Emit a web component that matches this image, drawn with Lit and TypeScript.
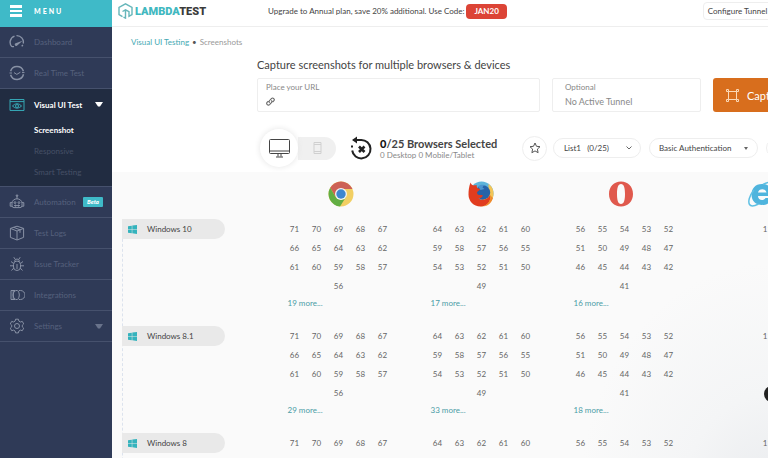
import { LitElement, html, css, svg, nothing } from "lit";
import { customElement, state } from "lit/decorators.js";

const icons = {
  dashboard: svg`<path stroke-width="1.400" d="M3 12.800A6.500 6.500 0 0 1 5.500 2.100M7.500 1.600A6.500 6.500 0 0 1 14.200 9.500M3 12.600h2M13.800 10.800l-1 1.600"/><path fill="#8891a5" stroke="none" d="M6 9.600L13.500 6.800 8.500 11.300a1.500 1.500 0 0 1-2.500-1.700z"/>`,
  realtime: svg`<path stroke-width="1.500" d="M1.600 6.200a6.700 6.700 0 0 1 12.800 0M14.500 9.300a6.700 6.700 0 0 1-12.900.400"/><path d="M.500 8h2.500M13 7.600h2.500M5 7.600l2.800 1.800 3.600-2.200"/>`,
  visual: svg`<path d="M1 2.500h14v11H1zM1 4.600h14M3.400 9q4.600-4.600 9.200 0q-4.600 4.400-9.200 0z"/><circle cx="8" cy="9" r="1.500"/>`,
  automation: svg`<path d="M8 1v4M3 9.200a5 4.400 0 0 1 10 0v2.400a2 2 0 0 1-2 2H5a2 2 0 0 1-2-2zM3 8.600H1.200v3.600H3M13 8.600h1.800v3.600H13M5 11.600h6M6.500 10.600v2M9.500 10.600v2"/><circle cx="6" cy="8.600" r=".9"/><circle cx="10" cy="8.600" r=".9"/><circle cx="8" cy="1.600" r=".8"/>`,
  logs: svg`<path d="M8 1.200l6.600 2.200v9L8 15l-6.600-2.600v-9zM1.400 3.400L8 6l6.600-2.600M8 6v9M4.600 2.300L11 4.800v3"/>`,
  bug: svg`<path d="M4.500 8.500a3.500 3.500 0 0 1 7 0V11a3.500 3.500 0 0 1-7 0zM5.600 5.400a2.400 2.400 0 0 1 4.800 0M6 3L4.800 1.200M10 3l1.200-1.800M4.500 7.500L2 5.500M11.500 7.500L14 5.500M4.500 9.800H1M11.500 9.800H15M4.800 12L2.500 14.500M11.200 12l2.300 2.500M8 8v5"/>`,
  integrations: svg`<path d="M6 3.500H2v9h4M10 3.500h1.500a4.500 4.500 0 0 1 0 9H10M8.500 3.500H6.800a5 5 0 0 0 0 9h1.700M8.800 3.500a8 8 0 0 1 0 9M4.200 3.500v9"/>`,
  settings: svg`<path d="M6.600 1.200h2.800l.5 1.900 1.500.9 1.900-.6 1.400 2.500-1.400 1.300v1.700l1.400 1.300-1.400 2.500-1.900-.6-1.500.9-.5 1.900H6.600l-.5-1.900-1.500-.9-1.900.6-1.400-2.500 1.400-1.300V7.200L1.300 5.900l1.400-2.500 1.900.6 1.500-.9z"/><circle cx="8" cy="8" r="2.500"/>`,
};

type IconName = keyof typeof icons;
interface NavItem {
  label: string;
  icon: IconName;
  badge?: string;
  expandable?: boolean;
  children?: string[];
}

const nav: NavItem[] = [
  { label: "Dashboard", icon: "dashboard" },
  { label: "Real Time Test", icon: "realtime" },
  {
    label: "Visual UI Test",
    icon: "visual",
    expandable: true,
    children: ["Screenshot", "Responsive", "Smart Testing"],
  },
  { label: "Automation", icon: "automation", badge: "Beta" },
  { label: "Test Logs", icon: "logs" },
  { label: "Issue Tracker", icon: "bug" },
  { label: "Integrations", icon: "integrations" },
  { label: "Settings", icon: "settings", expandable: true },
];

const chrome = [71, 70, 69, 68, 67, 66, 65, 64, 63, 62, 61, 60, 59, 58, 57, 56];
const firefox = chrome.map((v) => v - 7);
const opera = chrome.map((v) => v - 15);

interface System {
  name: string;
  shown: number;
  more: number[];
}

const systems: System[] = [
  { name: "Windows 10", shown: 16, more: [19, 17, 16] },
  { name: "Windows 8.1", shown: 16, more: [29, 33, 18] },
  { name: "Windows 8", shown: 5, more: [] },
];

@customElement("side-nav")
export class SideNav extends LitElement {
  static styles = css`
    :host {
      display: block;
      background: #2f3a57;
      color: #56617d;
      font-size: 8px;
    }
    button {
      font: inherit;
      color: inherit;
      background: none;
      border: 0;
      padding: 0;
    }
    .menu {
      display: flex;
      align-items: center;
      gap: 12px;
      width: 100%;
      height: 27px;
      padding: 0 0 6px 10px;
      background: #3fbac8;
      color: #fff;
      font-size: 7px;
      font-weight: 900;
      letter-spacing: 2px;
    }
    .bars {
      width: 12px;
      height: 12px;
      fill: #fff;
    }
    ul {
      list-style: none;
      margin: 0;
      padding: 0;
    }
    .entry {
      border-bottom: 1px solid #46516d;
    }
    .row {
      display: flex;
      align-items: center;
      height: 30px;
      padding: 0 9px;
      text-decoration: none;
      color: inherit;
      white-space: nowrap;
    }
    .icon {
      width: 16px;
      height: 16px;
      margin-right: 9px;
      fill: none;
      stroke: #8891a5;
      stroke-width: 1;
      flex: none;
    }
    .caret {
      width: 8px;
      height: 5px;
      margin-left: auto;
      fill: #69738b;
    }
    .badge {
      margin-left: auto;
      padding: 0 4px;
      border-radius: 1px;
      background: #3fbac8;
      color: #fff;
      font-size: 6px;
      line-height: 10px;
      font-weight: 900;
      font-style: italic;
    }
    .open {
      background: #212c41;
      padding-bottom: 3px;
    }
    .open .row {
      color: #fff;
      font-weight: 700;
      height: 31px;
    }
    .open .icon {
      stroke: #35a5b3;
    }
    .open .caret {
      fill: #fff;
    }
    .child {
      display: block;
      padding-left: 34px;
      line-height: 21px;
      color: #465066;
      text-decoration: none;
    }
    .child[aria-current] {
      color: #fff;
      font-weight: 700;
    }
  `;

  render() {
    return html`
      <button class="menu">
        <svg class="bars" viewBox="0 0 12 12" aria-hidden="true">
          <path d="M0 0h12v3H0zM0 5h12v2H0zM0 9h12v3H0z" />
        </svg>
        MENU
      </button>
      <nav>
        <ul>
          ${nav.map(
            (item) => html`<li class="entry ${item.children ? "open" : ""}">
              <a class="row" href="#">
                <svg class="icon" viewBox="0 0 16 16" aria-hidden="true">${icons[item.icon]}</svg>
                <span>${item.label}</span>
                ${item.badge ? html`<span class="badge">${item.badge}</span>` : nothing}
                ${item.expandable
                  ? html`<svg class="caret" viewBox="0 0 8 5" aria-hidden="true"><path d="M0 0h8L5 4.500H3z" /></svg>`
                  : nothing}
              </a>
              ${item.children
                ? html`<ul>
                    ${item.children.map(
                      (c, i) => html`<li>
                        <a class="child" href="#" aria-current=${i === 0 ? "page" : nothing}>${c}</a>
                      </li>`
                    )}
                  </ul>`
                : nothing}
            </li>`
          )}
        </ul>
      </nav>
    `;
  }
}

@customElement("browser-matrix")
export class BrowserMatrix extends LitElement {
  @state() private picked = new Set<string>();

  static styles = css`
    :host {
      display: block;
      flex: 1;
      background: radial-gradient(ellipse 190px 240px at 100% 90%, #e9ebee 0, #f4f5f6 45%, #fafafa 100%);
    }
    table,
    thead,
    tbody {
      display: block;
    }
    tbody {
      margin-left: 10px;
      border-left: 1px dashed #dce3ee;
    }
    tr {
      display: grid;
    }
    .head {
      grid-template-columns: 159px repeat(4, 140px);
      height: 47px;
      box-sizing: border-box;
      padding-top: 9px;
    }
    .system {
      grid-template-columns: 144px repeat(4, 143px);
      height: 107px;
    }
    th,
    td {
      padding: 0;
      text-align: center;
      font-weight: 400;
    }
    .logo {
      width: 26px;
      height: 26px;
    }
    .os {
      display: flex;
      align-items: center;
      gap: 10px;
      width: 103px;
      height: 20px;
      margin-left: -1px;
      padding-left: 6px;
      box-sizing: border-box;
      border-radius: 0 10px 10px 0;
      background: #e9e9e9;
      color: #444;
      font-size: 8px;
    }
    .win {
      width: 9px;
      height: 9px;
      fill: #35b3bd;
    }
    .versions {
      display: flex;
      flex-wrap: wrap;
      justify-content: center;
      width: 110px;
      margin: 0 auto;
    }
    button {
      width: 22px;
      height: 19px;
      padding: 0;
      border: 0;
      background: none;
      font: inherit;
      font-size: 8px;
      color: #666;
    }
    button[aria-pressed="true"] {
      color: #2f9aa5;
      font-weight: 700;
    }
    .more {
      display: block;
      width: 102px;
      margin: 0 auto;
      text-align: left;
      color: #4a9ca6;
      text-decoration: none;
      font-size: 8px;
      line-height: 16px;
    }
  `;

  private toggle(key: string) {
    const next = new Set(this.picked);
    next.has(key) ? next.delete(key) : next.add(key);
    this.picked = next;
  }

  private cell(s: System, browser: string, versions: number[], more?: number) {
    return html`<td>
      <div class="versions">
        ${versions.slice(0, s.shown).map((v) => {
          const key = `${s.name}/${browser}/${v}`;
          return html`<button aria-pressed=${this.picked.has(key)} @click=${() => this.toggle(key)}>${v}</button>`;
        })}
      </div>
      ${more ? html`<a class="more" href="#">${more} more...</a>` : nothing}
    </td>`;
  }

  render() {
    return html`<table>
      <thead>
        <tr class="head">
          <td></td>
          <th scope="col" aria-label="Chrome">
            <svg class="logo" viewBox="0 0 26 26">
              <circle cx="13" cy="13" r="12.500" fill="#f2cf63" />
              <path d="M2.200 6.800A12.500 12.500 0 0 1 23.800 6.800L24.500 8H13L7.600 16z" fill="#cd6155" />
              <path d="M2.200 6.800A12.500 12.500 0 0 0 12 25.500L18 16l-5 3-5.400-3z" fill="#62ae43" />
              <circle cx="13" cy="13" r="6" fill="#f4f4f2" />
              <circle cx="13" cy="13" r="4.700" fill="#3e87cf" />
            </svg>
          </th>
          <th scope="col" aria-label="Firefox">
            <svg class="logo" viewBox="0 0 26 26">
              <circle cx="13.500" cy="12.500" r="12" fill="#5db4da" />
              <path d="M20.500 3c4 2.500 5.500 7 5 11-.800 6.500-6 11.500-13 11.500l3-8 5-4z" fill="#f3c557" />
              <circle cx="15" cy="11.500" r="7.200" fill="#2763a8" />
              <path d="M10 5.500c1.500-1.500 4-2 6-1.500l-1.500 2.500 2 1.500-4 1z" fill="#4b94cf" />
              <path d="M2.500 1.500c.500 1.500 1.500 2.500 3 3C6.500 4 8 4 9 4.500 8 6 9.500 7.500 12 8c0 1.500-2.500 2-3 3.500 0 2 1.500 2.500 3 2.500 1 0 2-.500 3 .500-1 2-2.500 2.800-4.500 3 4 2.800 9.500 1 11.500-3.500 1.500 5.500-2.500 11.500-9.500 11.500C5.500 25.500.500 20 .500 13.500c0-4 .500-8 2-12z" fill="#e13c1f" />
              <path d="M22 14c1.500 5-2 10.500-8 11.500 5.500 0 9.500-3.500 11-8.500z" fill="#f08a2b" />
            </svg>
          </th>
          <th scope="col" aria-label="Opera">
            <svg class="logo" viewBox="0 0 26 26">
              <path fill-rule="evenodd" d="M13 .500c7 0 12 5 12 12.500s-5 12.500-12 12.500S1 20.500 1 13 6 .500 13 .500zM13 3c-3 0-4 4-4 10s1 10 4 10 4-4 4-10-1-10-4-10z" fill="#e0594d" />
            </svg>
          </th>
          <th scope="col" aria-label="Internet Explorer">
            <svg class="logo" viewBox="0 0 26 26">
              <path fill-rule="evenodd" d="M14 3C7 3 3.500 8 3.500 13.500 3.500 20 8 24 14 24c5 0 8.500-2.500 10-7h-6.500c-2 3.500-7.500 2.500-7.500-2h15C25.500 7.500 21 3 14 3zM10 11.500c.500-4.500 8-4.500 8.500 0z" fill="#4fb4dd" />
              <path d="M6 9C1 15 0 21 1.500 23.500s6 1 9-.500" fill="none" stroke="#5fc0e4" stroke-width="1.500" />
              <path d="M15 3.500c4-2.500 10-4 10 2" fill="none" stroke="#5fc0e4" stroke-width="1.500" />
            </svg>
          </th>
        </tr>
      </thead>
      <tbody>
        ${systems.map(
          (s) => html`<tr class="system">
            <th scope="row">
              <div class="os">
                <svg class="win" viewBox="0 0 9 9" aria-hidden="true">
                  <path d="M0 1.300L3.800.700v3.500H0zM4.300.600L9 0v4.200H4.300zM0 4.700h3.800v3.500L0 7.700zM4.300 4.700H9V9l-4.700-.700z" />
                </svg>
                ${s.name}
              </div>
            </th>
            ${this.cell(s, "chrome", chrome, s.more[0])}
            ${this.cell(s, "firefox", firefox, s.more[1])}
            ${this.cell(s, "opera", opera, s.more[2])}
            ${this.cell(s, "ie", [11])}
          </tr>`
        )}
      </tbody>
    </table>`;
  }
}

@customElement("app-root")
export class AppRoot extends LitElement {
  static styles = css`
    :host {
      display: grid;
      grid-template-columns: 112px minmax(0, 1fr);
      height: 100vh;
      position: relative;
      overflow: hidden;
      font-family: Lato, "Liberation Sans", sans-serif;
      color: #444;
      font-size: 8px;
    }
    button,
    input,
    select {
      font: inherit;
      color: inherit;
      box-sizing: border-box;
    }
    main {
      display: flex;
      flex-direction: column;
      overflow: hidden;
      background: #fff;
      white-space: nowrap;
    }
    header {
      display: flex;
      align-items: center;
      flex: none;
      height: 27px;
      padding: 0 0 4px 6px;
      box-sizing: border-box;
      border-bottom: 1px solid #eee;
    }
    header > * {
      flex: none;
    }
    .brand {
      display: flex;
      align-items: center;
      gap: 2px;
      width: 150px;
      color: #41b8c0;
      text-decoration: none;
      font: 900 11px Roboto, sans-serif;
    }
    .brand b {
      color: #3b3b3b;
      font-weight: 900;
    }
    .mark {
      width: 15px;
      height: 16px;
      fill: none;
      stroke: #66b6ba;
      stroke-width: 1.400;
    }
    .code {
      margin-left: 2px;
      padding: 0 8px;
      border-radius: 4px;
      background: #dc4436;
      color: #fff;
      font-weight: 700;
      line-height: 15px;
    }
    .tunnel {
      width: 90px;
      height: 18px;
      margin-left: 196px;
      padding: 0 4px;
      border: 1px solid #eee;
      border-radius: 4px;
      background: #fff;
      text-align: left;
    }
    .crumbs {
      display: flex;
      gap: 3px;
      padding: 9px 0 0 19px;
      line-height: 12px;
      color: #999;
    }
    .crumbs a {
      color: #44a9b3;
      text-decoration: none;
    }
    .dot {
      color: #555;
    }
    h1 {
      margin: 9px 0 5px 145px;
      font-size: 11px;
      line-height: 16px;
      font-weight: 400;
      color: #444;
    }
    .form {
      display: flex;
      gap: 12px;
      padding-left: 145px;
    }
    .field {
      display: flex;
      flex-direction: column;
      flex: none;
      height: 34px;
      box-sizing: border-box;
      padding: 1px 8px;
      border: 1px solid #eee;
      border-radius: 2px;
      color: #888;
    }
    .url {
      width: 283px;
    }
    .optional {
      width: 149px;
      padding-left: 12px;
    }
    .field label {
      line-height: 14px;
    }
    .line {
      display: flex;
      align-items: center;
      height: 14px;
      font-size: 9px;
    }
    .link {
      width: 9px;
      height: 9px;
      fill: none;
      stroke: #666;
      stroke-width: 1.200;
    }
    .field input,
    .field select {
      appearance: none;
      flex: 1;
      min-width: 0;
      border: 0;
      outline: 0;
      padding: 0;
      background: none;
    }
    .capture {
      display: flex;
      align-items: center;
      gap: 8px;
      flex: none;
      width: 120px;
      height: 34px;
      padding: 0 13px;
      border: 0;
      border-radius: 3px;
      background: #d86e1d;
      color: #fff;
      font-size: 11px;
    }
    .frame {
      width: 13px;
      height: 13px;
      fill: none;
      stroke: #fbd9b8;
    }
    .tools {
      display: flex;
      align-items: center;
      flex: none;
      height: 60px;
      padding: 12px 0 0 148px;
      box-sizing: border-box;
    }
    .tools > * {
      flex: none;
    }
    .device {
      display: flex;
      align-items: center;
      width: 76px;
      height: 23px;
      margin-right: 14px;
      border-radius: 12px;
      background: linear-gradient(90deg, #fff 50%, #f0f0f0 50%);
    }
    .device button {
      display: grid;
      place-items: center;
      border: 0;
      padding: 0;
      background: none;
    }
    .device .desktop {
      width: 38px;
      height: 38px;
      border-radius: 50%;
      background: #fff;
      box-shadow: 0 0 6px #e4e4e4;
    }
    .device .mobile {
      width: 38px;
      height: 23px;
    }
    .screen {
      width: 21px;
      height: 19px;
      fill: none;
      stroke: #444;
    }
    .phone {
      width: 9px;
      height: 12px;
      fill: none;
      stroke: #d0d0d0;
    }
    .reset {
      width: 24px;
      height: 24px;
      padding: 0;
      border: 0;
      background: none;
    }
    .reset svg {
      width: 24px;
      height: 24px;
      fill: none;
      stroke: #222;
      stroke-width: 2;
    }
    .count {
      width: 142px;
      margin-left: 6px;
      font-size: 11px;
      line-height: 13px;
      font-weight: 700;
      color: #444;
    }
    .count small {
      display: block;
      font-size: 8px;
      line-height: 10px;
      font-weight: 400;
      color: #888;
    }
    .count b {
      font-weight: 900;
      color: #111;
    }
    .star {
      display: grid;
      place-items: center;
      width: 25px;
      height: 25px;
      padding: 0;
      border: 1px solid #eee;
      border-radius: 50%;
      background: #fff;
    }
    .star svg {
      width: 12px;
      height: 12px;
      fill: none;
      stroke: #555;
    }
    .pick {
      display: flex;
      align-items: center;
      width: 88px;
      height: 20px;
      margin-left: 6px;
      padding: 0 8px 0 10px;
      box-sizing: border-box;
      border: 1px solid #eee;
      border-radius: 10px;
    }
    .pick select {
      appearance: none;
      flex: 1;
      min-width: 0;
      border: 0;
      padding: 0;
      background: none;
      white-space: pre;
    }
    .auth {
      width: 109px;
      margin-left: 8px;
      padding: 0 9px;
    }
    .chev {
      width: 6px;
      height: 4px;
      fill: none;
      stroke: #666;
    }
    .tick {
      width: 4px;
      height: 4px;
      fill: #666;
    }
    .chat {
      position: absolute;
      right: -12px;
      bottom: 56px;
      width: 16px;
      height: 16px;
      padding: 0;
      border: 0;
      border-radius: 50%;
      background: #222;
    }
  `;

  render() {
    return html`
      <side-nav></side-nav>
      <main>
        <header>
          <a class="brand" href="#">
            <svg class="mark" viewBox="0 0 15 16" aria-hidden="true">
              <path d="M4.500 13.700L1 11.600V4.400L7.500.900 14 4.400v7.200l-3 1.700V8.700L7.500 6.900 4.500 8.500M7.500 6.900v8.200l-2-1" />
            </svg>
            <span>LAMBDA<b>TEST</b></span>
          </a>
          <span>Upgrade to Annual plan, save 20% additional. Use Code:</span>
          <span class="code">JAN20</span>
          <button class="tunnel">Configure Tunnel</button>
        </header>
        <nav class="crumbs" aria-label="Breadcrumb">
          <a href="#">Visual UI Testing</a><span class="dot">•</span><span>Screenshots</span>
        </nav>
        <h1>Capture screenshots for multiple browsers &amp; devices</h1>
        <div class="form">
          <div class="field url">
            <label for="url">Place your URL</label>
            <div class="line">
              <svg class="link" viewBox="0 0 10 10" aria-hidden="true">
                <path d="M4 6.500a2 2 0 0 1 0-2.600L6 1.700a1.800 1.800 0 0 1 2.600 2.600L7.300 5.700M6 3.700a2 2 0 0 1 0 2.600L4 8.400a1.800 1.800 0 0 1-2.600-2.600L2.700 4.500" />
              </svg>
              <input id="url" type="url" />
            </div>
          </div>
          <div class="field optional">
            <label for="active">Optional</label>
            <div class="line">
              <select id="active"><option>No Active Tunnel</option></select>
            </div>
          </div>
          <button class="capture">
            <svg class="frame" viewBox="0 0 13 13" aria-hidden="true">
              <path d="M2.500 2.500h8v8h-8zM.500.500h2v2h-2zM10.500.500h2v2h-2zM.500 10.500h2v2h-2zM10.500 10.500h2v2h-2z" />
            </svg>
            Capture
          </button>
        </div>
        <div class="tools">
          <div class="device">
            <button class="desktop" aria-label="Desktop">
              <svg class="screen" viewBox="0 0 21 19">
                <rect x=".5" y=".5" width="20" height="14" rx="1" />
                <path d="M.500 12h20M9 15v2.500M12 15v2.500M7 18h7" />
              </svg>
            </button>
            <button class="mobile" aria-label="Mobile">
              <svg class="phone" viewBox="0 0 9 12"><path d="M1 .500h7v11H1zM1 9.500h7M1 2.500h7" /></svg>
            </button>
          </div>
          <button class="reset" aria-label="Reset selection">
            <svg viewBox="0 0 24 24">
              <path d="M3.500 4H11a9.200 9.200 0 1 1-8.800 10.500" />
              <path d="M7 .500L2 4l5 3.500z" fill="#222" stroke="none" />
              <path d="M2 9.500v2" />
              <path d="M9 10.500l5.500 5.500M14.500 10.500L9 16" stroke-width="2.600" />
            </svg>
          </button>
          <div class="count"><b>0</b>/25 Browsers Selected<small>0 Desktop 0 Mobile/Tablet</small></div>
          <button class="star" aria-label="Favourite">
            <svg viewBox="0 0 12 12"><path d="M6 1l1.500 3.300 3.500.400-2.600 2.400.700 3.600L6 8.900l-3.100 1.800.700-3.600L1 4.700l3.500-.400z" /></svg>
          </button>
          <div class="pick">
            <select aria-label="List"><option>List1 &nbsp; (0/25)</option></select>
            <svg class="chev" viewBox="0 0 6 4" aria-hidden="true"><path d="M.500.500L3 3 5.500.500" /></svg>
          </div>
          <div class="pick auth">
            <select aria-label="Authentication"><option>Basic Authentication</option></select>
            <svg class="tick" viewBox="0 0 4 4" aria-hidden="true"><path d="M0 1h4L2 4z" /></svg>
          </div>
          <div class="pick auth"></div>
        </div>
        <browser-matrix></browser-matrix>
      </main>
      <button class="chat" aria-label="Chat"></button>
    `;
  }
}
